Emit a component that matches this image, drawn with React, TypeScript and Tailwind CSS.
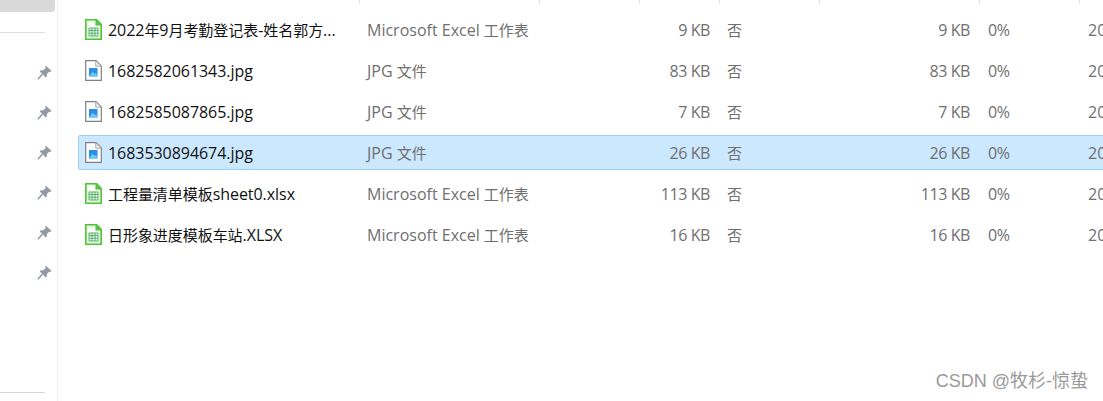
function Txt({ v }: { v: string }) {
  const parts = v.split(/([\u3000-\u9fff]+)/).filter(Boolean);
  return (
    <>
      {parts.map((p, i) =>
        /[\u3000-\u9fff]/.test(p) ? (
          <span key={i} className="font-['Noto_Sans_CJK_SC'] text-[15px]">{p}</span>
        ) : (
          <span key={i} className="font-['Open_Sans'] text-[16px]">{p}</span>
        )
      )}
    </>
  );
}

function ExcelIcon() {
  return (
    <svg width="17" height="21" viewBox="0 0 17 21" className="shrink-0">
      <path d="M0.8 0.8H11L16.2 6V20.2H0.8Z" fill="#e9f8df" stroke="#4cc636" strokeWidth="1.6" />
      <path d="M3 3H10V7.5H14V18H3Z" fill="#f8fdf5" />
      <path d="M10.5 0H12L17 5V6.5H10.5Z" fill="#5cc245" />
      <path d="M4 9H13V17H4ZM4 11.5H13M4 14.2H13M7 9V17M10 9V17" fill="none" stroke="#4fae68" strokeWidth="1" />
    </svg>
  );
}

function ImageIcon() {
  return (
    <svg width="17" height="21" viewBox="0 0 17 21" className="shrink-0">
      <path d="M0.7 0.7H11L16.3 6V20.3H0.7Z" fill="#fff" stroke="#7e8184" strokeWidth="1.2" />
      <path d="M10.7 0.7V6.3H16.3Z" fill="#e9e9e9" stroke="#a0a2a4" strokeWidth="0.8" />
      <rect x="4" y="8" width="8.5" height="8.5" fill="#2b8fe8" />
      <path d="M4 16.5L7.6 11.5L9.6 14L10.6 13L12.5 15.3V16.5Z" fill="#6cc8f6" />
    </svg>
  );
}

function Pin() {
  return (
    <svg width="15" height="15" viewBox="0 0 14 14" className="block">
      <path d="M8.2 0.5L13.5 5.6L12.4 6.6L11.4 6.2L9.2 8.4L9.3 10.6L8.2 11.6L2.6 6L3.7 4.9L5.9 5L8.1 2.8L7.7 1.6Z" fill="#939aa1" />
      <path d="M5 8.6L0.8 13.2" stroke="#939aa1" strokeWidth="1.4" />
    </svg>
  );
}

const rows = [
  { n: "2022年9月考勤登记表-姓名郭方...", t: "Microsoft Excel 工作表", s: "9 KB", x: true },
  { n: "1682582061343.jpg", t: "JPG 文件", s: "83 KB", x: false },
  { n: "1682585087865.jpg", t: "JPG 文件", s: "7 KB", x: false },
  { n: "1683530894674.jpg", t: "JPG 文件", s: "26 KB", x: false, sel: true },
  { n: "工程量清单模板sheet0.xlsx", t: "Microsoft Excel 工作表", s: "113 KB", x: true },
  { n: "日形象进度模板车站.XLSX", t: "Microsoft Excel 工作表", s: "16 KB", x: true },
];

const ticks = ["w-[283px]", "w-[180px]", "w-[100px]", "w-[80px]", "w-[100px]", "w-[160px]", "w-[100px]"];

export default function App() {
  return (
    <div className="relative flex h-[401px] w-[1103px] overflow-hidden bg-white">
      <aside className="flex h-full w-[58px] shrink-0 flex-col border-r border-[#f2f2f2]">
        <div className="h-3 w-[55px] rounded-br-[3px] bg-[#d9d9d9]" />
        <div className="mt-5 h-px w-[45px] bg-[#dedede]" />
        <div className="mt-[32px] flex flex-col items-end gap-[25px] pr-[5px]">
          {Array.from({ length: 6 }).map((_, i) => (
            <Pin key={i} />
          ))}
        </div>
        <div className="mt-auto mb-[8px] h-px w-[45px] bg-[#d8d8d8]" />
      </aside>
      <main className="min-w-0 flex-1">
        <div className="flex h-[4px] pl-[19px]">
          {ticks.map((w, i) => (
            <div key={i} className={`${w} shrink-0 border-r border-[#e2e2e2]`} />
          ))}
        </div>
        <div className="mt-[8px] flex w-[1100px] flex-col gap-[5px] pl-[20px]">
          {rows.map((r) => (
            <div
              key={r.n}
              className={`mb-px flex h-[35px] items-center border leading-[20px] text-[#6f6f6f] ${
                r.sel ? "rounded-l-[2px] border-[#99d1fb] bg-[#cce8ff]" : "border-transparent"
              }`}
            >
              <div className="flex w-[281px] shrink-0 items-center gap-[6px] pl-[6px] text-[#111]">
                {r.x ? <ExcelIcon /> : <ImageIcon />}
                <span className="whitespace-nowrap tracking-[-0.05px]"><Txt v={r.n} /></span>
              </div>
              <div className="w-[280px] shrink-0 whitespace-nowrap pl-[7px]"><Txt v={r.t} /></div>
              <div className="w-[70px] shrink-0 whitespace-nowrap text-right tracking-[-0.4px]"><Txt v={r.s} /></div>
              <div className="w-[190px] shrink-0 pl-[17px]"><Txt v="否" /></div>
              <div className="w-[70px] shrink-0 whitespace-nowrap text-right tracking-[-0.4px]"><Txt v={r.s} /></div>
              <div className="w-[118px] shrink-0 pl-[18px] tracking-[-0.4px]"><Txt v="0%" /></div>
              <div className="whitespace-nowrap"><Txt v="2023/5/8" /></div>
            </div>
          ))}
        </div>
      </main>
      <div className="absolute bottom-[6px] right-[15px] font-['Liberation_Sans','Noto_Sans_CJK_SC',sans-serif] text-[18px] text-[#9a9a9a]">
        CSDN @牧杉-惊蛰
      </div>
    </div>
  );
}
